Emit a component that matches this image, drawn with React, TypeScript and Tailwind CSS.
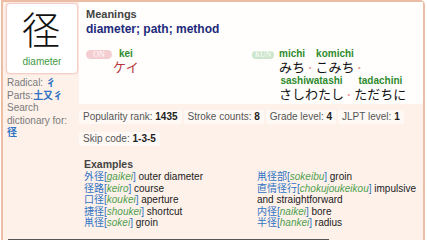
const jp = "font-['Liberation_Sans','Noto_Sans_CJK_JP',sans-serif]";

const kun = [
  { romaji: "michi", kana: "みち" },
  { romaji: "komichi", kana: "こみち" },
  { romaji: "sashiwatashi", kana: "さしわたし" },
  { romaji: "tadachini", kana: "ただちに" },
];

const stats = [
  { label: "Popularity rank:", value: "1435" },
  { label: "Stroke counts:", value: "8" },
  { label: "Grade level:", value: "4" },
  { label: "JLPT level:", value: "1" },
  { label: "Skip code:", value: "1-3-5" },
];

const leftExamples = [
  { word: "外径", reading: "gaikei", gloss: "outer diameter" },
  { word: "径路", reading: "keiro", gloss: "course" },
  { word: "口径", reading: "koukei", gloss: "aperture" },
  { word: "捷径", reading: "shoukei", gloss: "shortcut" },
  { word: "鼡径", reading: "sokei", gloss: "groin" },
];

const rightExamples = [
  { word: "鼡径部", reading: "sokeibu", gloss: "groin" },
  { word: "直情径行", reading: "chokujoukeikou", gloss: "impulsive and straightforward" },
  { word: "内径", reading: "naikei", gloss: "bore" },
  { word: "半径", reading: "hankei", gloss: "radius" },
];

type Ex = { word: string; reading: string; gloss: string };

const Example = ({ ex }: { ex: Ex }) => (
  <div className="text-[10px] leading-[11.5px] text-[#222]">
    <span className="text-[#2f72c2]">{ex.word}[</span>
    <span className="italic text-[#4f9f4f]">{ex.reading}</span>
    <span className="text-[#2f72c2]">]</span> {ex.gloss}
  </div>
);

const Reading = ({ romaji, kana, red }: { romaji: string; kana: string; red?: boolean }) => (
  <div className="flex flex-col items-center">
    <span className="h-[12px] text-[10px] leading-[12px] font-bold text-[#2e8b2e]">{romaji}</span>
    <span className={`h-[15px] text-[13px] leading-[15px] ${red ? "text-[#b8323a]" : "text-[#111]"}`}>{kana}</span>
  </div>
);

const Dot = () => (
  <span className="mx-[3px] mt-[12px] text-[13px] leading-[15px] font-bold text-[#f0a0a0]">·</span>
);

export default function App() {
  return (
    <div className={`w-[427px] h-[240px] overflow-hidden bg-white ${jp}`}>
      <div className="ml-[1px] w-[424px] h-[270px] border-2 border-[#eabda4] rounded-tr-[5px] bg-[#fdf1ea]">
        <div className="flex">
          {/* left column */}
          <div className="w-[76px] shrink-0 pl-[3px] pt-[1px]">
            <div className="w-[72px] h-[71px] bg-white border border-[#f4cfc5] rounded-[4px] shadow-[0_0_2px_#f3c9bd] flex flex-col items-center">
              <span className="mt-[1px] text-[38px] leading-[46px] text-[#111] font-['Noto_Sans_CJK_JP',sans-serif] font-light pr-[2px]">径</span>
              <span className="mt-[5px] text-[10px] leading-[12px] text-[#3f9a45]">diameter</span>
            </div>
            <div className="mt-[3px] pl-[1px] text-[10px] leading-[12.5px] text-[#7a7a7a]">
              <div>Radical: <span className="font-bold text-[#2f72c2]">彳</span></div>
              <div>Parts:<span className="font-bold text-[#2f72c2]">土又彳</span></div>
              <div>Search</div>
              <div>dictionary for:</div>
              <div className="font-bold text-[#2f72c2]">径</div>
            </div>
          </div>

          {/* right column */}
          <div className="flex-1">
            <div className="h-[102px] bg-[#fffefd] rounded-br-[3px] pl-[7px] pt-[6px]">
              <div className="text-[11px] leading-[13px] font-bold text-[#444]">Meanings</div>
              <div className="text-[12px] leading-[16px] font-bold text-[#1d2a7a]">diameter; path; method</div>
              <div className="mt-[11px] flex">
                <div className="w-[166px] flex items-start">
                  <span className="mt-[2px] w-[26px] h-[9px] rounded-full bg-[#f4cdd0] text-white text-[8px] leading-[9px] text-center font-['Liberation_Serif',serif]">ON</span>
                  <div className="ml-[1px]">
                    <Reading romaji="kei" kana="ケイ" red />
                  </div>
                </div>
                <div className="flex items-start">
                  <span className="mt-[3px] w-[22px] h-[8px] rounded-full bg-[#cde5cd] text-white text-[7.5px] leading-[8px] text-center font-['Liberation_Serif',serif]">KUN</span>
                  <div className="ml-[5px] w-[132px] flex flex-wrap items-start">
                    {kun.map((k, i) => (
                      <div key={k.romaji} className="flex items-start">
                        <Reading romaji={k.romaji} kana={k.kana} />
                        {i < kun.length - 1 && <Dot />}
                      </div>
                    ))}
                  </div>
                </div>
              </div>
            </div>

            <div className="mt-[6px] flex flex-wrap gap-x-[2px] gap-y-[8px] pr-[10px]">
              {stats.map((s) => (
                <div key={s.label} className="h-[14px] px-[4px] bg-[#fff9f5] rounded-[2px] text-[10px] leading-[14px] text-[#555]">
                  {s.label} <span className="font-bold text-[#222]">{s.value}</span>
                </div>
              ))}
            </div>

            <div className="mt-[12px] pl-[5px]">
              <div className="text-[10.5px] leading-[12px] font-bold text-[#444]">Examples</div>
              <div className="mt-[1px] flex">
                <div className="w-[173px]">
                  {leftExamples.map((ex) => <Example key={ex.word} ex={ex} />)}
                </div>
                <div className="w-[160px]">
                  {rightExamples.map((ex) => <Example key={ex.word} ex={ex} />)}
                </div>
              </div>
            </div>
          </div>
        </div>

        {/* stroke order grid */}
        <div className="mt-[10px] ml-[5px] flex">
          {Array.from({ length: 8 }).map((_, i) => (
            <div key={i} className="relative w-[41px] h-[41px] border border-[#555] -ml-[1px] first:ml-0 bg-white">
              <div className="absolute left-1/2 top-0 h-full border-l border-dashed border-[#ccc]" />
              <div className="absolute top-1/2 left-0 w-full border-t border-dashed border-[#ccc]" />
            </div>
          ))}
        </div>
      </div>
    </div>
  );
}
